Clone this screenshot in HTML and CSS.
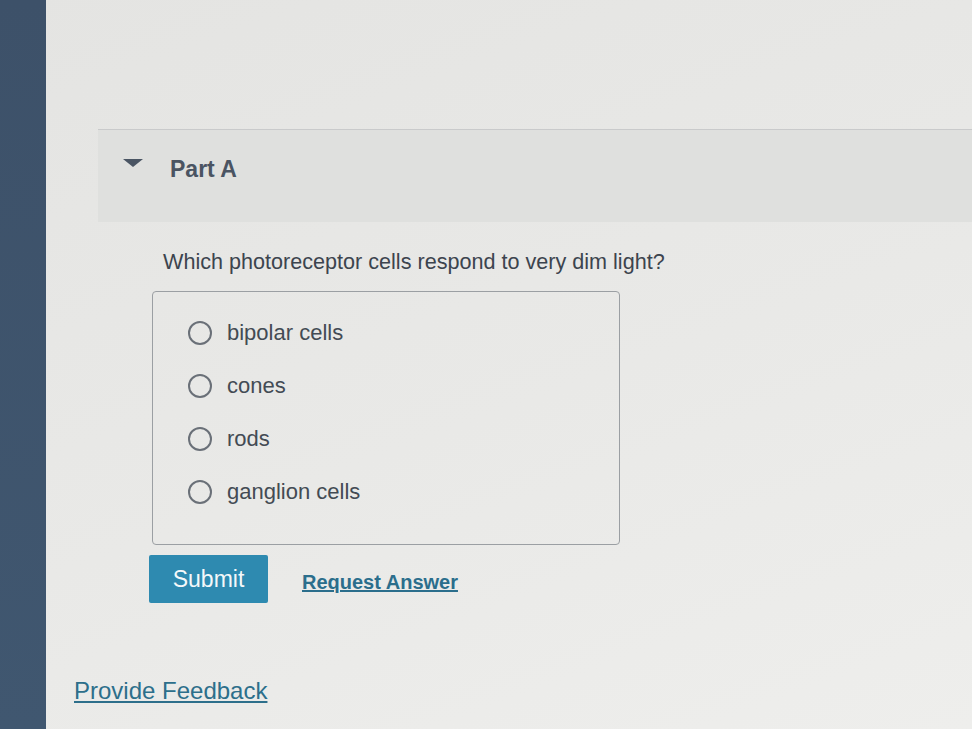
FILE: index.html
```html
<html>
  <head>
    <title>Part A</title>
    <link rel="stylesheet" href="styles.css">
  </head>
  <body>
    <aside class="sidebar"></aside>
    <div class="page">
      <section class="part">
        <header class="part-header">
          <span class="caret"></span>
          <h2>Part A</h2>
        </header>
        <div class="part-body">
          <p class="question">Which photoreceptor cells respond to very dim light?</p>
          <div class="choices">
            <label class="choice"><span class="radio"></span>bipolar cells</label>
            <label class="choice"><span class="radio"></span>cones</label>
            <label class="choice"><span class="radio"></span>rods</label>
            <label class="choice"><span class="radio"></span>ganglion cells</label>
          </div>
          <div class="actions">
            <button class="submit">Submit</button>
            <a class="request" href="#">Request Answer</a>
          </div>
        </div>
      </section>
      <a class="feedback" href="#">Provide Feedback</a>
    </div>
  </body>
</html>
```

FILE: styles.css
```css
html,
body {
  margin: 0;
  padding: 0;
  font-family: "Liberation Sans", Arial, sans-serif;
}

body {
  display: flex;
  height: 729px;
  overflow: hidden;
  background: linear-gradient(160deg, #e4e4e2 0%, #e9e9e7 55%, #eeeeec 100%);
}

.sidebar {
  width: 46px;
  flex-shrink: 0;
  background: linear-gradient(180deg, #3d5169 0%, #405770 100%);
}

.page {
  flex: 1;
  display: flex;
  flex-direction: column;
  padding-top: 129px;
}

.part {
  margin-left: 52px;
}

.part-header {
  display: flex;
  align-items: center;
  height: 92px;
  border-top: 1px solid #c9cacb;
  background: #dfe0de;
  padding-left: 25px;
}

.caret {
  width: 0;
  height: 0;
  border-left: 10px solid transparent;
  border-right: 10px solid transparent;
  border-top: 8px solid #4a5563;
  margin-top: -26px;
}

.part-header h2 {
  margin: 0 0 14px 27px;
  font-size: 23px;
  font-weight: bold;
  color: #4a5462;
}

.part-body {
  padding-left: 54px;
}

.question {
  margin: 27px 0 0 11px;
  font-size: 21.6px;
  color: #3c444e;
}

.choices {
  width: 468px;
  height: 254px;
  margin-top: 16px;
  border: 1px solid #9b9fa3;
  border-radius: 4px;
  display: flex;
  flex-direction: column;
  padding: 28px 0 0 35px;
  box-sizing: border-box;
  gap: 28px;
}

.choice {
  display: flex;
  align-items: center;
  gap: 15px;
  font-size: 22px;
  color: #434b54;
  height: 25px;
}

.radio {
  width: 20px;
  height: 20px;
  border: 2px solid #6a7078;
  border-radius: 50%;
}

.actions {
  display: flex;
  align-items: center;
  gap: 34px;
  margin-top: 10px;
  margin-left: -3px;
}

.submit {
  width: 119px;
  height: 48px;
  border: none;
  border-radius: 2px;
  background: #2e8ab0;
  color: #f4f8fa;
  font-family: inherit;
  font-size: 23px;
}

.request {
  margin-top: 6px;
  font-size: 20px;
  font-weight: bold;
  color: #2b6e8c;
}

.feedback {
  margin: 74px 0 0 28px;
  font-size: 24px;
  color: #2d6f8b;
}
```
